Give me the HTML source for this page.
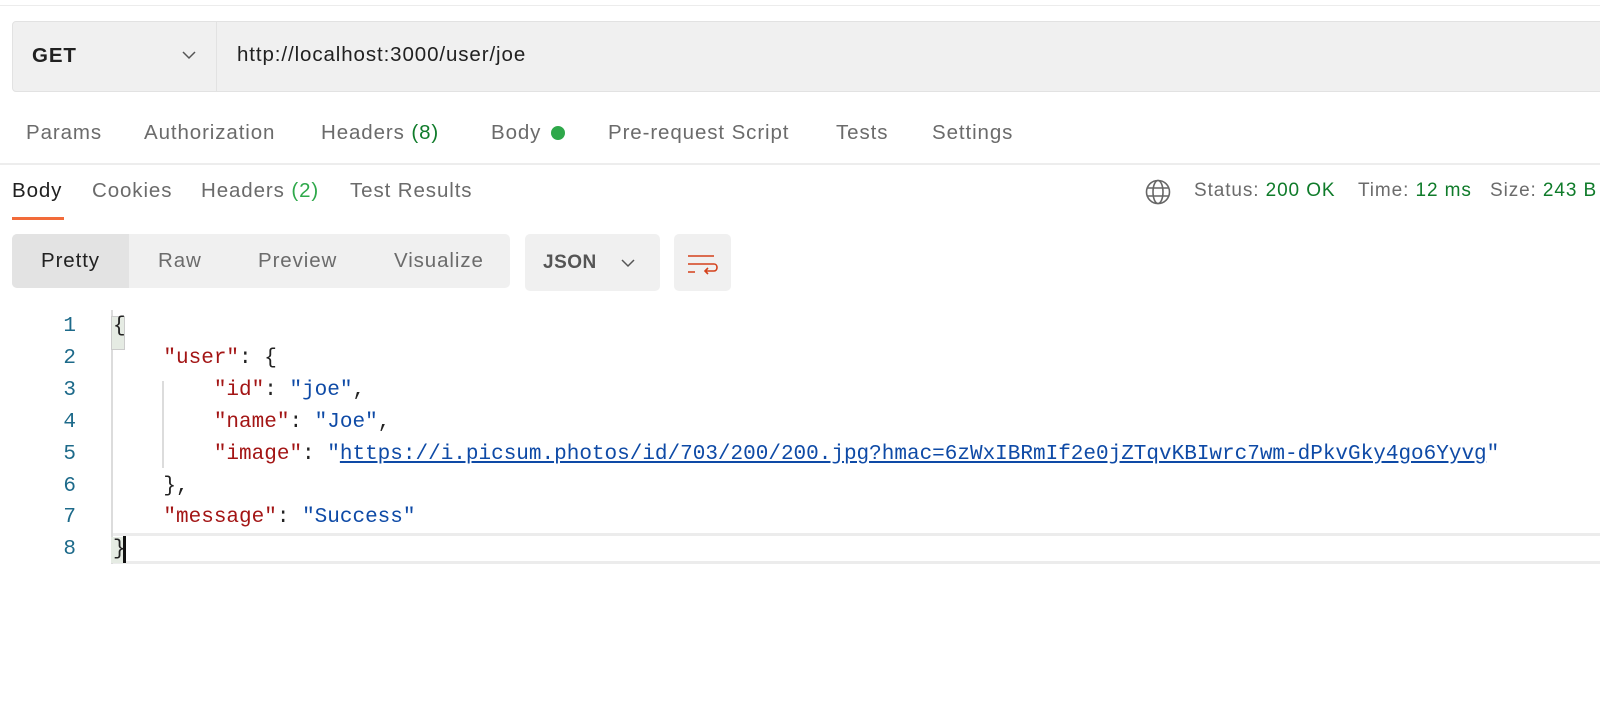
<!DOCTYPE html>
<html><head><style>
body{margin:0;width:1600px;height:728px;background:#fff;font-family:"Liberation Sans",sans-serif;position:relative;overflow:hidden;color:#6b6b6b}
.a{position:absolute;white-space:nowrap}
.t{font-size:20.5px;letter-spacing:0.9px}
.g{color:#0f7b2a}
.code{font-family:"Liberation Mono",monospace;font-size:21px}
.k{color:#a31515}.s{color:#0e4aa6}
</style></head><body>
<div class="a" style="left:0;top:5px;width:1600px;height:1px;background:#ececec"></div>
<div class="a" style="left:12px;top:21px;width:1600px;height:69px;background:#f0f0f0;border:1px solid #e2e2e2;border-radius:4px"></div>
<div class="a" style="left:216px;top:22px;width:1px;height:69px;background:#e2e2e2"></div>
<div class="a t" style="left:32px;top:44px;font-weight:bold;color:#212121">GET</div>
<svg class="a" style="left:181px;top:50px" width="16" height="10"><path d="M2 2l6 6 6-6" stroke="#555" stroke-width="1.5" fill="none"/></svg>
<div class="a t" style="left:237px;top:43px;color:#212121">http://localhost:3000/user/joe</div>
<div class="a t" style="top:121px;left:26px">Params</div>
<div class="a t" style="top:121px;left:144px">Authorization</div>
<div class="a t" style="top:121px;left:321px">Headers <span class="g">(8)</span></div>
<div class="a t" style="top:121px;left:491px">Body</div>
<div class="a" style="top:126px;left:551px;width:14px;height:14px;border-radius:50%;background:#2ea84a"></div>
<div class="a t" style="top:121px;left:608px">Pre-request Script</div>
<div class="a t" style="top:121px;left:836px">Tests</div>
<div class="a t" style="top:121px;left:932px">Settings</div>
<div class="a" style="left:0;top:163px;width:1600px;height:2px;background:#ededed"></div>
<div class="a t" style="top:179px;left:12px;color:#212121">Body</div>
<div class="a" style="top:217px;left:12px;width:52px;height:3px;background:#f26b3a"></div>
<div class="a t" style="top:179px;left:92px">Cookies</div>
<div class="a t" style="top:179px;left:201px">Headers <span style="color:#2ea84a">(2)</span></div>
<div class="a t" style="top:179px;left:350px">Test Results</div>
<svg class="a" style="left:1145px;top:179px" width="26" height="26" fill="none" stroke="#666" stroke-width="1.6"><circle cx="13" cy="13" r="11.5"/><ellipse cx="13" cy="13" rx="5" ry="11.5"/><path d="M2 9h22M2 17h22"/></svg>
<div class="a" style="top:180px;left:1194px;font-size:19px;letter-spacing:0.9px">Status: <span class="g">200 OK</span></div>
<div class="a" style="top:180px;left:1358px;font-size:19px;letter-spacing:0.9px">Time: <span class="g">12 ms</span></div>
<div class="a" style="top:180px;left:1490px;font-size:19px;letter-spacing:0.9px">Size: <span class="g">243 B</span></div>
<div class="a" style="left:12px;top:234px;width:498px;height:54px;background:#f0f0f0;border-radius:5px"></div>
<div class="a" style="left:12px;top:234px;width:117px;height:54px;background:#e3e3e3;border-radius:5px 0 0 5px"></div>
<div class="a t" style="top:249px;left:41px;color:#212121">Pretty</div>
<div class="a t" style="top:249px;left:158px">Raw</div>
<div class="a t" style="top:249px;left:258px">Preview</div>
<div class="a t" style="top:249px;left:394px">Visualize</div>
<div class="a" style="left:525px;top:234px;width:135px;height:57px;background:#f0f0f0;border-radius:5px"></div>
<div class="a" style="top:252px;left:543px;font-size:19px;font-weight:bold;color:#555;letter-spacing:0.5px">JSON</div>
<svg class="a" style="left:620px;top:258px" width="16" height="10"><path d="M2 2l6 6 6-6" stroke="#555" stroke-width="1.5" fill="none"/></svg>
<div class="a" style="left:674px;top:234px;width:57px;height:57px;background:#f0f0f0;border-radius:5px"></div>
<svg class="a" style="left:686px;top:254px" width="34" height="22" fill="none" stroke="#d4411a" stroke-width="1.6"><path d="M2 2h26M2 10h26c4 0 4 7 0 7h-9M22 14l-3 3 3 3M2 18h7"/></svg>
<div class="a" style="left:111px;top:310px;width:2px;height:254px;background:#dcdcdc"></div>
<div class="a" style="left:113px;top:533px;width:1487px;height:3px;background:#ececec"></div>
<div class="a" style="left:113px;top:561px;width:1487px;height:3px;background:#ececec"></div>
<div class="a" style="left:162px;top:381px;width:2px;height:87px;background:#dcdcdc"></div>
<div class="a" style="left:111px;top:316px;width:12px;height:32px;background:#e5ebe3;border:1px solid #ccc"></div>
<div class="a" style="left:111px;top:537px;width:12px;height:26px;background:#e5ebe3"></div>
<div class="a" style="left:123px;top:536px;width:3px;height:27px;background:#111"></div>
<div class="a code" style="left:0;top:311px;width:76px;text-align:right;line-height:31.9px;color:#1d6a8a">1<br>2<br>3<br>4<br>5<br>6<br>7<br>8</div>
<div class="a code" style="left:113px;top:311px;line-height:31.9px;color:#222;white-space:pre">{
    <span class="k">"user"</span>: {
        <span class="k">"id"</span>: <span class="s">"joe"</span>,
        <span class="k">"name"</span>: <span class="s">"Joe"</span>,
        <span class="k">"image"</span>: <span class="s">"<span style="text-decoration:underline">https://i.picsum.photos/id/703/200/200.jpg?hmac=6zWxIBRmIf2e0jZTqvKBIwrc7wm-dPkvGky4go6Yyvg</span>"</span>
    },
    <span class="k">"message"</span>: <span class="s">"Success"</span>
}</div>
</body></html>
